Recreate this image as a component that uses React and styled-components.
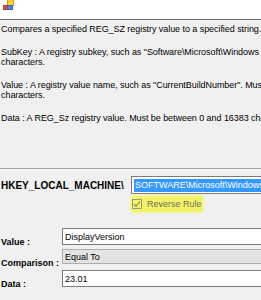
import React from "react";
import styled, { createGlobalStyle } from "styled-components";

const Global = createGlobalStyle`
  html, body { margin: 0; padding: 0; background: #f0f0f0; }
  body { font-family: "Liberation Sans", Arial, sans-serif; overflow: hidden; }
`;

const Page = styled.div`
  width: 261px;
  height: 300px;
  overflow: hidden;
  display: flex;
  flex-direction: column;
  background: #f0f0f0;
`;

const Header = styled.div`
  height: 19px;
  flex: none;
  background: #ffffff;
  border-bottom: 1px solid #6f6f6f;
  display: flex;
  align-items: flex-start;
  padding-left: 3px;
`;

const Description = styled.div`
  padding: 4px 0 0 1px;
  font-size: 9px;
  line-height: 10px;
  letter-spacing: -0.06px;
  color: #000;
  white-space: nowrap;
  display: flex;
  flex-direction: column;
  gap: 13px;
`;

const Para = styled.div``;

const Divider = styled.div`
  margin-top: ${(p) => p.$top}px;
  height: 0;
  border-top: 1px solid #a0a0a0;
  border-bottom: 1px solid #ffffff;
  flex: none;
`;

const KeyRow = styled.div`
  display: flex;
  align-items: center;
  margin-top: 6px;
  white-space: nowrap;
`;

const KeyLabel = styled.div`
  width: 131px;
  flex: none;
  padding-left: 1px;
  font-size: 10px;
  font-weight: bold;
  color: #000;
  box-sizing: border-box;
`;

const TextBox = styled.div`
  flex: 1;
  min-width: 0;
  height: ${(p) => p.$h}px;
  box-sizing: border-box;
  border: 1px solid ${(p) => (p.$combo ? "#adadad" : "#7a7a7a")};
  background: ${(p) => (p.$combo ? "#e3e3e3" : "#ffffff")};
  border-right: none;
  display: flex;
  align-items: center;
  padding-left: 2px;
  font-size: 9px;
  color: #000;
  white-space: nowrap;
  overflow: hidden;
`;

const Selected = styled.span`
  background: #3399ff;
  color: #ffffff;
  line-height: 13px;
  padding-left: 1px;
`;

const CheckRow = styled.div`
  margin-top: 2px;
  padding-left: 131px;
  display: flex;
`;

const Highlight = styled.div`
  display: flex;
  align-items: center;
  gap: 5px;
  height: 16px;
  padding: 0 1px 0 1px;
  background: #f3f36a;
  border-radius: 3px;
  box-shadow: 0 0 2px 1px #f6f69a;
`;

const Check = styled.div`
  width: 10px;
  height: 10px;
  box-sizing: border-box;
  border: 1px solid #9a9a7a;
  display: flex;
  align-items: center;
  justify-content: center;
`;

const CheckText = styled.span`
  font-size: 9px;
  color: #6d6d5a;
`;

const Fields = styled.div`
  margin-top: 16px;
  display: flex;
  flex-direction: column;
`;

const FieldRow = styled.div`
  display: flex;
  align-items: flex-end;
  margin-top: ${(p) => p.$mt}px;
`;

const FieldLabel = styled.div`
  width: 62px;
  flex: none;
  font-size: 9px;
  font-weight: bold;
  color: #000;
  padding-left: 1px;
  box-sizing: border-box;
  white-space: nowrap;
  line-height: 10px;
  margin-bottom: ${(p) => -p.$drop}px;
`;

function RegIcon() {
  return (
    <svg width="11" height="10" viewBox="0 0 11 10">
      <rect x="4.5" y="-0.5" width="6" height="6" fill="#f7d22c" stroke="#d89a14" strokeWidth="1" />
      <rect x="0.5" y="5.5" width="4" height="4" fill="#e2503a" stroke="#b33a2a" strokeWidth="1" />
      <rect x="4.5" y="5.5" width="5" height="4" fill="#4f86d8" stroke="#3566b0" strokeWidth="1" />
    </svg>
  );
}

export default function App() {
  return (
    <>
      <Global />
      <Page>
        <Header>
          <RegIcon />
        </Header>
        <Description>
          <Para>Compares a specified REG_SZ registry value to a specified string.</Para>
          <Para>
            SubKey : A registry subkey, such as "Software\Microsoft\Windows NT\CurrentVersion". Must be between 1 and 255
            <br />
            characters.
          </Para>
          <Para>
            Value : A registry value name, such as "CurrentBuildNumber". Must be between 1 and 255
            <br />
            characters.
          </Para>
          <Para>Data : A REG_Sz registry value. Must be between 0 and 16383 characters.</Para>
        </Description>
        <Divider $top={45} />
        <KeyRow>
          <KeyLabel>HKEY_LOCAL_MACHINE\</KeyLabel>
          <TextBox $h={18}>
            <Selected>SOFTWARE\Microsoft\Windows NT\CurrentVersion\Uninstall</Selected>
          </TextBox>
        </KeyRow>
        <CheckRow>
          <Highlight>
            <Check>
              <svg width="8" height="8" viewBox="0 0 8 8">
                <path d="M1 4.2 L3 6.3 L7 1.3" fill="none" stroke="#8a8a6a" strokeWidth="1.1" />
              </svg>
            </Check>
            <CheckText>Reverse Rule</CheckText>
          </Highlight>
        </CheckRow>
        <Fields>
          <FieldRow $mt={0}>
            <FieldLabel $drop={2}>Value :</FieldLabel>
            <TextBox $h={17}>DisplayVersion</TextBox>
          </FieldRow>
          <FieldRow $mt={4}>
            <FieldLabel $drop={4}>Comparison :</FieldLabel>
            <TextBox $h={15} $combo>Equal To</TextBox>
          </FieldRow>
          <FieldRow $mt={6}>
            <FieldLabel $drop={2}>Data :</FieldLabel>
            <TextBox $h={17}>23.01</TextBox>
          </FieldRow>
        </Fields>
      </Page>
    </>
  );
}
